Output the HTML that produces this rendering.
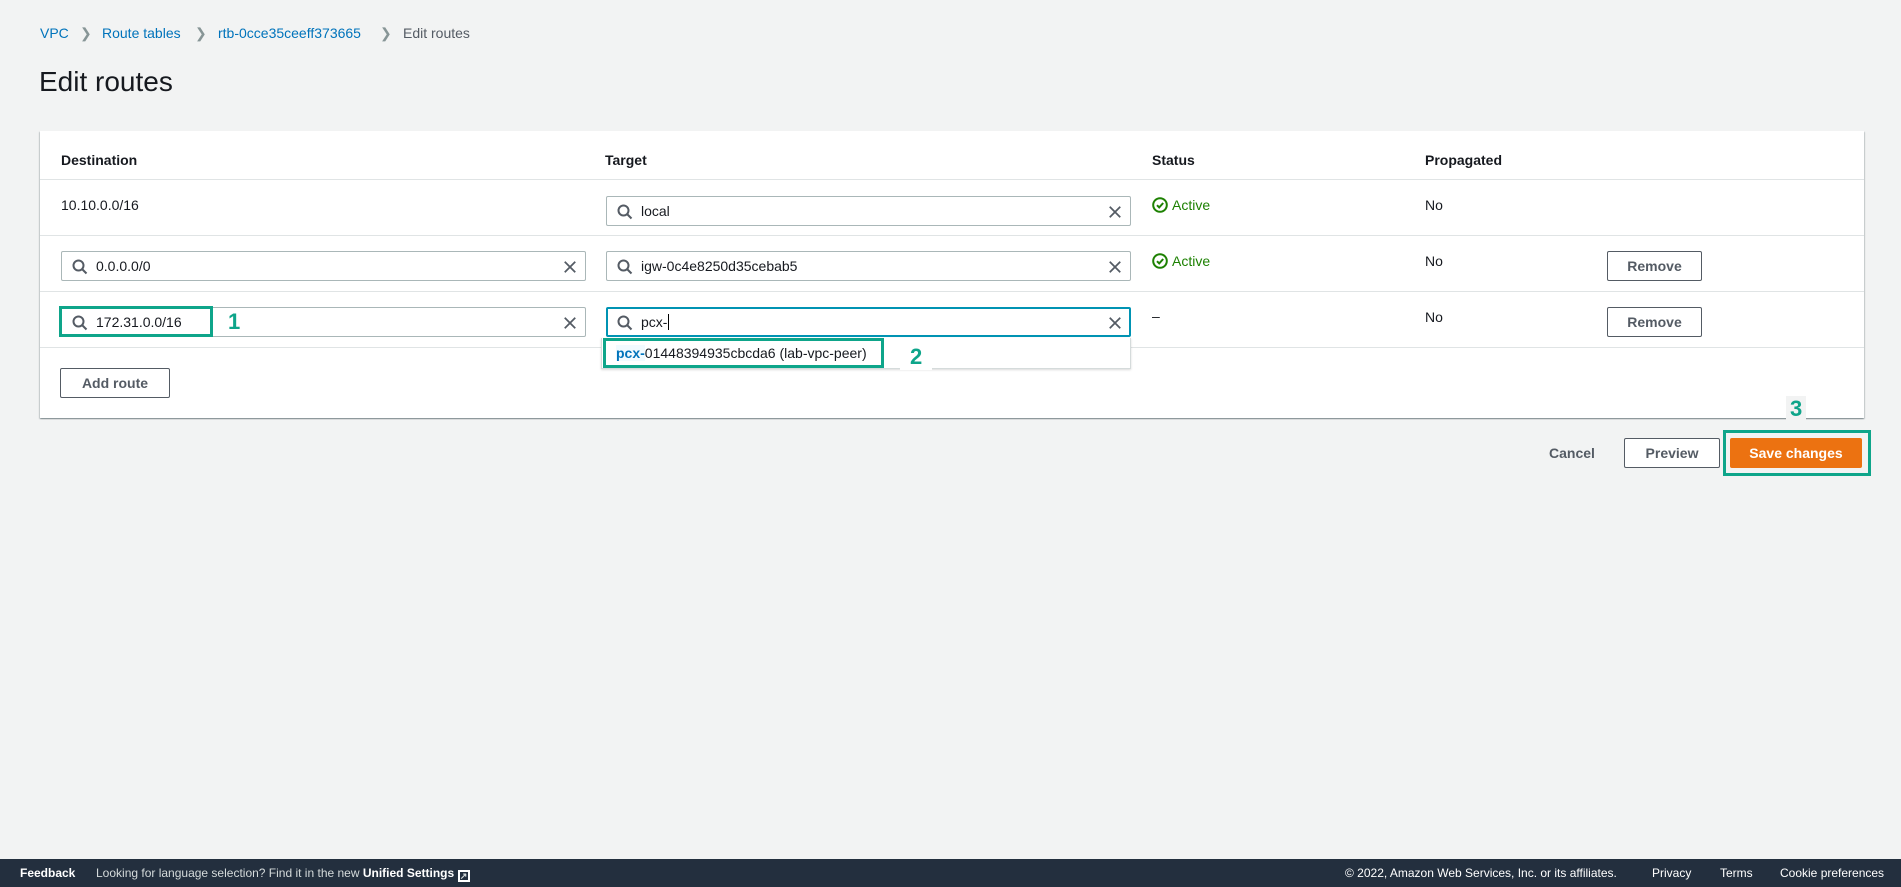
<!DOCTYPE html>
<html><head><meta charset="utf-8"><style>
*{box-sizing:border-box;margin:0;padding:0}
body{width:1901px;height:887px;background:#f2f3f3;font-family:"Liberation Sans",sans-serif;font-size:14px;color:#16191f;position:relative;overflow:hidden}
.a{position:absolute}
.bc{top:25px;font-size:14px;color:#0073bb}
.sep{color:#879596}
.card{left:40px;top:131px;width:1824px;height:287px;background:#fff;box-shadow:0 1px 1px rgba(0,28,36,.3),1px 1px 1px rgba(0,28,36,.15),-1px 1px 1px rgba(0,28,36,.15)}
.hd{font-weight:bold;top:152px;font-size:14px}
.line{left:40px;width:1824px;height:1px;background:#e0e4e5}
.inp{height:30px;border:1px solid #aab7b8;border-radius:2px;background:#fff}
.inp .t{position:absolute;left:34px;top:6px;font-size:14px}
.inp svg.s{position:absolute;left:10px;top:7px}
.inp svg.x{position:absolute;right:8px;top:8px}
.btn{border:1px solid #545b64;border-radius:2px;background:#fff;font-weight:bold;color:#545b64;text-align:center;line-height:28px;font-size:14px}
.grn{border:3px solid #0ea58a}
.num{color:#0ea58a;font-weight:bold;font-size:22px}
.ft{top:859px;left:0;width:1901px;height:28px;background:#232f3e;color:#fff;font-size:12px}
.ft span{position:absolute;top:7px}
</style></head><body>
<div class="a bc" style="left:40px">VPC</div>
<div class="a bc sep" style="left:80px">&#x276F;</div>
<div class="a bc" style="left:102px">Route tables</div>
<div class="a bc sep" style="left:195px">&#x276F;</div>
<div class="a bc" style="left:218px">rtb-0cce35ceeff373665</div>
<div class="a bc sep" style="left:380px">&#x276F;</div>
<div class="a bc" style="left:403px;color:#545b64">Edit routes</div>
<div class="a" style="left:39px;top:66px;font-size:28px;color:#16191f">Edit routes</div>

<div class="a card"></div>
<div class="a hd" style="left:61px">Destination</div>
<div class="a hd" style="left:605px">Target</div>
<div class="a hd" style="left:1152px">Status</div>
<div class="a hd" style="left:1425px">Propagated</div>
<div class="a line" style="top:179px"></div>
<div class="a line" style="top:235px"></div>
<div class="a line" style="top:291px"></div>
<div class="a line" style="top:347px"></div>

<div class="a" style="left:61px;top:197px">10.10.0.0/16</div>

<svg width="0" height="0" style="position:absolute"><defs>
<symbol id="s" viewBox="0 0 16 16"><circle cx="6.5" cy="6.5" r="5" fill="none" stroke="#545b64" stroke-width="2"/><line x1="10" y1="10" x2="14.5" y2="14.5" stroke="#545b64" stroke-width="2"/></symbol>
<symbol id="x" viewBox="0 0 16 16"><path d="M2 2L14 14M14 2L2 14" stroke="#545b64" stroke-width="2"/></symbol>
<symbol id="ok" viewBox="0 0 16 16"><circle cx="8" cy="8" r="6.8" fill="none" stroke="#1d8102" stroke-width="2"/><path d="M5 8.2l2.2 2.2 4-4.4" fill="none" stroke="#1d8102" stroke-width="2"/></symbol>
</defs></svg>

<div class="a inp" style="left:606px;top:196px;width:525px"><svg class="s" width="16" height="16"><use href="#s"/></svg><span class="t">local</span><svg class="x" width="14" height="14"><use href="#x"/></svg></div>
<div class="a inp" style="left:61px;top:251px;width:525px"><svg class="s" width="16" height="16"><use href="#s"/></svg><span class="t">0.0.0.0/0</span><svg class="x" width="14" height="14"><use href="#x"/></svg></div>
<div class="a inp" style="left:606px;top:251px;width:525px"><svg class="s" width="16" height="16"><use href="#s"/></svg><span class="t">igw-0c4e8250d35cebab5</span><svg class="x" width="14" height="14"><use href="#x"/></svg></div>
<div class="a inp" style="left:61px;top:307px;width:525px"><svg class="s" width="16" height="16"><use href="#s"/></svg><span class="t">172.31.0.0/16</span><svg class="x" width="14" height="14"><use href="#x"/></svg></div>
<div class="a inp" style="left:606px;top:307px;width:525px;border:2px solid #0093b3"><svg class="s" width="16" height="16" style="left:9px;top:6px"><use href="#s"/></svg><span class="t" style="left:33px;top:5px">pcx-<span style="border-left:1px solid #000;margin-left:1px"></span></span><svg class="x" width="14" height="14" style="right:7px;top:7px"><use href="#x"/></svg></div>

<div class="a" style="left:601px;top:338px;width:530px;height:31px;background:#fff;border:1px solid #d5dbdb;border-top:none;box-shadow:0 1px 2px rgba(0,0,0,.15)"></div>
<div class="a grn" style="left:603px;top:338px;width:281px;height:30px;background:#fff"></div>
<div class="a" style="left:616px;top:345px;font-size:14px"><span style="color:#0073bb;font-weight:bold;background:#f1faff">pcx-</span>01448394935cbcda6 (lab-vpc-peer)</div>
<div class="a num" style="left:900px;top:344px;background:#fff;padding:0 10px">2</div>

<div class="a grn" style="left:59px;top:306px;width:154px;height:31px"></div>
<div class="a num" style="left:228px;top:309px">1</div>

<svg class="a" style="left:1152px;top:197px" width="16" height="16"><use href="#ok"/></svg>
<div class="a" style="left:1172px;top:197px;color:#1d8102">Active</div>
<svg class="a" style="left:1152px;top:253px" width="16" height="16"><use href="#ok"/></svg>
<div class="a" style="left:1172px;top:253px;color:#1d8102">Active</div>
<div class="a" style="left:1152px;top:308px">–</div>
<div class="a" style="left:1425px;top:197px">No</div>
<div class="a" style="left:1425px;top:253px">No</div>
<div class="a" style="left:1425px;top:309px">No</div>
<div class="a btn" style="left:1607px;top:251px;width:95px;height:30px">Remove</div>
<div class="a btn" style="left:1607px;top:307px;width:95px;height:30px">Remove</div>
<div class="a btn" style="left:60px;top:368px;width:110px;height:30px">Add route</div>

<div class="a num" style="left:1786px;top:396px;background:#f2f3f3;padding:0 4px">3</div>
<div class="a" style="left:1549px;top:445px;font-weight:bold;color:#545b64">Cancel</div>
<div class="a btn" style="left:1624px;top:438px;width:96px;height:30px">Preview</div>
<div class="a grn" style="left:1723px;top:430px;width:148px;height:46px"></div>
<div class="a" style="left:1730px;top:438px;width:132px;height:30px;background:#ec7211;border-radius:2px;color:#fff;font-weight:bold;text-align:center;line-height:30px">Save changes</div>

<div class="a ft">
<span style="left:20px;font-weight:bold">Feedback</span>
<span style="left:96px;color:#d5dbdb">Looking for language selection? Find it in the new <b style="color:#fff">Unified Settings</b> <b style="display:inline-block;width:12px;height:12px;border:2px solid #fff;vertical-align:-2px;font-size:9px;line-height:8px;text-align:center">&#x2197;</b></span>
<span style="left:1345px">© 2022, Amazon Web Services, Inc. or its affiliates.</span>
<span style="left:1652px">Privacy</span>
<span style="left:1720px">Terms</span>
<span style="left:1780px">Cookie preferences</span>
</div>
</body></html>
